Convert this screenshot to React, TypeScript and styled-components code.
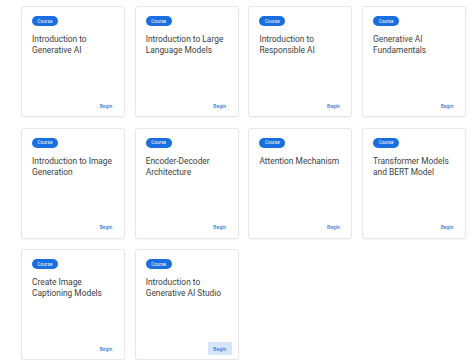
import React from "react";
import { createGlobalStyle, styled } from "styled-components";

const Global = createGlobalStyle`
  html, body {
    margin: 0;
    padding: 0;
    background: #fff;
    font-family: Roboto, "Liberation Sans", Arial, sans-serif;
  }
`;

const Grid = styled.div`
  display: grid;
  grid-template-columns: repeat(4, 104px);
  grid-auto-rows: 111px;
  column-gap: 9.7px;
  row-gap: 10.5px;
  padding: 6px 0 0 21px;
`;

const Card = styled.div`
  display: flex;
  flex-direction: column;
  box-sizing: border-box;
  padding: 9px 6px 4px 10px;
  background: #fff;
  border: 1px solid #e6e7ea;
  border-radius: 3px;
  box-shadow: 0 1px 2px rgba(60, 64, 67, 0.06);
`;

const Badge = styled.span`
  align-self: flex-start;
  display: flex;
  align-items: center;
  justify-content: center;
  width: 26px;
  height: 10px;
  border-radius: 5px;
  background: #1a6fe0;
  color: #fff;
  font-size: 4.5px;
  letter-spacing: 0.1px;
`;

const Title = styled.div`
  margin-top: 8px;
  color: #3c4043;
  font-size: 8.4px;
  line-height: 11px;
  padding-right: 6px;
`;

const Footer = styled.div`
  margin-top: auto;
  display: flex;
  justify-content: flex-end;
`;

const Begin = styled.button<{ $active?: boolean }>`
  width: 24px;
  height: 13px;
  padding: 0;
  border: none;
  border-radius: 1px;
  background: ${(p) => (p.$active ? "#d6e5fb" : "transparent")};
  color: #3b78d8;
  font-family: inherit;
  font-size: 5px;
  font-weight: 500;
  cursor: pointer;
`;

const courses = [
  "Introduction to Generative AI",
  "Introduction to Large Language Models",
  "Introduction to Responsible AI",
  "Generative AI Fundamentals",
  "Introduction to Image Generation",
  "Encoder-Decoder Architecture",
  "Attention Mechanism",
  "Transformer Models and BERT Model",
  "Create Image Captioning Models",
  "Introduction to Generative AI Studio",
];

export default function App() {
  return (
    <>
      <Global />
      <Grid>
        {courses.map((title, i) => (
          <Card key={title}>
            <Badge>Course</Badge>
            <Title>{title}</Title>
            <Footer>
              <Begin $active={i === courses.length - 1}>Begin</Begin>
            </Footer>
          </Card>
        ))}
      </Grid>
    </>
  );
}
